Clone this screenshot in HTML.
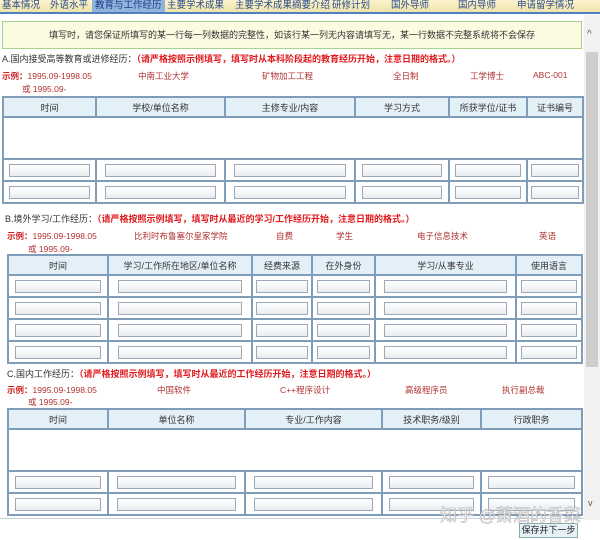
<!DOCTYPE html>
<html><head><meta charset="utf-8"><style>
*{margin:0;padding:0;box-sizing:border-box}
body{width:600px;height:540px;overflow:hidden;background:#fff;font-family:"Liberation Sans","Noto Sans CJK SC",sans-serif;font-size:9px;color:#333;position:relative}
.abs{position:absolute;white-space:nowrap}
#tabs{left:0;top:0;width:600px;height:14px;background:linear-gradient(#fbf3cf,#efe3a8);border-bottom:2px solid #4f7fbf}
#tabs span{position:absolute;top:0px;font-size:9.5px;line-height:12px;color:#2a4a8a}
#tabs .act{background:#8fb3dc;color:#1c3f88;padding:0 3px;top:0;height:12px;line-height:12px}
#note{left:2px;top:21px;width:580px;height:28px;background:#fbfbe2;border:1px solid #a8d38c;text-align:center;line-height:26px;font-size:9px;color:#333}
#sb{left:584px;top:15px;width:16px;height:505px;background:#f1f1f1}
#thumb{left:586px;top:52px;width:12px;height:315px;background:#cdcdcd}
.red{color:#e0181c;font-weight:bold}
.ex{color:#b03030;font-size:8.5px}
.exl{color:#d02020;font-weight:bold}
table{position:absolute;border-collapse:collapse;table-layout:fixed}
td,th{border:2px solid #7f9db8;font-weight:normal;font-size:9px;color:#333;text-align:center;padding:0}
th{background:#e4f0f8;height:20px}
td{height:22px}
td i{display:block;margin:0 auto;width:88%;height:13px;border:1px solid #9aaab8;background:linear-gradient(#fff,#e9ecef)}
.blank td{height:42px;border-top:none;border-bottom:none}
.btn{left:519px;top:523px;width:59px;height:15px;border:1px solid #8aa;background:#e6f2f8;font-size:9px;line-height:13px;text-align:center;color:#222}
.wm{left:440px;top:501px;font-size:17px;color:rgba(255,255,255,0.9);-webkit-text-stroke:0.5px #aaa;letter-spacing:0}
</style></head><body>
<div id="tabs" class="abs">
<span style="left:2px">基本情况</span><span style="left:50px">外语水平</span><span class="act" style="left:92px">教育与工作经历</span><span style="left:167px">主要学术成果</span><span style="left:235px">主要学术成果摘要介绍</span><span style="left:332px">研修计划</span><span style="left:391px">国外导师</span><span style="left:458px">国内导师</span><span style="left:517px">申请留学情况</span>
</div>
<div id="note" class="abs">填写时，请您保证所填写的某一行每一列数据的完整性，如该行某一列无内容请填写无，某一行数据不完整系统将不会保存</div>
<div id="sb" class="abs"></div><div id="thumb" class="abs"></div>
<div class="abs" style="left:587px;top:29px;font-size:10px;color:#555">^</div>
<div class="abs" style="left:588px;top:498px;font-size:9px;color:#555">v</div>

<div class="abs" style="left:2px;top:52px">A.国内接受高等教育或进修经历：<span class="red">（请严格按照示例填写，填写时从本科阶段起的教育经历开始，注意日期的格式。）</span></div>
<div class="abs ex" style="left:2px;top:70px"><span class="exl">示例：</span>1995.09-1998.05</div>
<div class="abs ex" style="left:138px;top:70px">中南工业大学</div>
<div class="abs ex" style="left:262px;top:70px">矿物加工工程</div>
<div class="abs ex" style="left:393px;top:70px">全日制</div>
<div class="abs ex" style="left:470px;top:70px">工学博士</div>
<div class="abs ex" style="left:533px;top:70px">ABC-001</div>
<div class="abs ex" style="left:22px;top:83px">或 1995.09-</div>
<table style="left:2px;top:96px;width:580px">
<colgroup><col style="width:93px"><col style="width:129px"><col style="width:130px"><col style="width:94px"><col style="width:78px"><col style="width:56px"></colgroup>
<tr><th>时间</th><th>学校/单位名称</th><th>主修专业/内容</th><th>学习方式</th><th>所获学位/证书</th><th>证书编号</th></tr>
<tr class="blank"><td style="border-right:none"></td><td style="border:none"></td><td style="border:none"></td><td style="border:none"></td><td style="border:none"></td><td style="border-left:none"></td></tr>
<tr><td><i></i></td><td><i></i></td><td><i></i></td><td><i></i></td><td><i></i></td><td><i></i></td></tr>
<tr><td><i></i></td><td><i></i></td><td><i></i></td><td><i></i></td><td><i></i></td><td><i></i></td></tr>
</table>

<div class="abs" style="left:5px;top:212px">B.境外学习/工作经历：<span class="red">（请严格按照示例填写，填写时从最近的学习/工作经历开始，注意日期的格式。）</span></div>
<div class="abs ex" style="left:7px;top:230px"><span class="exl">示例：</span>1995.09-1998.05</div>
<div class="abs ex" style="left:134px;top:230px">比利时布鲁塞尔皇家学院</div>
<div class="abs ex" style="left:276px;top:230px">自费</div>
<div class="abs ex" style="left:336px;top:230px">学生</div>
<div class="abs ex" style="left:417px;top:230px">电子信息技术</div>
<div class="abs ex" style="left:539px;top:230px">英语</div>
<div class="abs ex" style="left:28px;top:243px">或 1995.09-</div>
<table style="left:7px;top:254px;width:574px">
<colgroup><col style="width:100px"><col style="width:144px"><col style="width:60px"><col style="width:63px"><col style="width:141px"><col style="width:66px"></colgroup>
<tr><th>时间</th><th>学习/工作所在地区/单位名称</th><th>经费来源</th><th>在外身份</th><th>学习/从事专业</th><th>使用语言</th></tr>
<tr><td><i></i></td><td><i></i></td><td><i></i></td><td><i></i></td><td><i></i></td><td><i></i></td></tr>
<tr><td><i></i></td><td><i></i></td><td><i></i></td><td><i></i></td><td><i></i></td><td><i></i></td></tr>
<tr><td><i></i></td><td><i></i></td><td><i></i></td><td><i></i></td><td><i></i></td><td><i></i></td></tr>
<tr><td><i></i></td><td><i></i></td><td><i></i></td><td><i></i></td><td><i></i></td><td><i></i></td></tr>
</table>

<div class="abs" style="left:7px;top:367px">C.国内工作经历：<span class="red">（请严格按照示例填写，填写时从最近的工作经历开始，注意日期的格式。）</span></div>
<div class="abs ex" style="left:7px;top:384px"><span class="exl">示例：</span>1995.09-1998.05</div>
<div class="abs ex" style="left:157px;top:384px">中国软件</div>
<div class="abs ex" style="left:280px;top:384px">C++程序设计</div>
<div class="abs ex" style="left:405px;top:384px">高级程序员</div>
<div class="abs ex" style="left:502px;top:384px">执行副总裁</div>
<div class="abs ex" style="left:28px;top:396px">或 1995.09-</div>
<table style="left:7px;top:408px;width:574px">
<colgroup><col style="width:100px"><col style="width:137px"><col style="width:137px"><col style="width:99px"><col style="width:101px"></colgroup>
<tr><th>时间</th><th>单位名称</th><th>专业/工作内容</th><th>技术职务/级别</th><th>行政职务</th></tr>
<tr class="blank"><td style="border-right:none"></td><td style="border:none"></td><td style="border:none"></td><td style="border:none"></td><td style="border-left:none"></td></tr>
<tr><td><i></i></td><td><i></i></td><td><i></i></td><td><i></i></td><td><i></i></td></tr>
<tr><td><i></i></td><td><i></i></td><td><i></i></td><td><i></i></td><td><i></i></td></tr>
</table>
<div class="abs" style="left:0;top:518px;width:584px;height:1px;background:#c8d4dc"></div>
<div class="abs wm">知乎 @萧酒的香菜</div>
<div class="abs btn">保存并下一步</div>
</body></html>
